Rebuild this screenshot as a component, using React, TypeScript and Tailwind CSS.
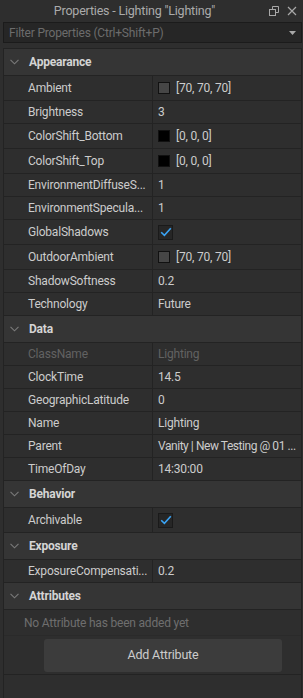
import React from 'react';

type Row = {
  label: string;
  value?: string;
  swatch?: string;
  check?: boolean;
  disabled?: boolean;
  tight?: boolean;
};

type Section = { title: string; rows: Row[] };

const sections: Section[] = [
  {
    title: 'Appearance',
    rows: [
      { label: 'Ambient', value: '[70, 70, 70]', swatch: 'bg-[#464646]' },
      { label: 'Brightness', value: '3' },
      { label: 'ColorShift_Bottom', value: '[0, 0, 0]', swatch: 'bg-[#000000]' },
      { label: 'ColorShift_Top', value: '[0, 0, 0]', swatch: 'bg-[#000000]' },
      { label: 'EnvironmentDiffuseS...', value: '1' },
      { label: 'EnvironmentSpecula...', value: '1' },
      { label: 'GlobalShadows', check: true },
      { label: 'OutdoorAmbient', value: '[70, 70, 70]', swatch: 'bg-[#464646]' },
      { label: 'ShadowSoftness', value: '0.2' },
      { label: 'Technology', value: 'Future' },
    ],
  },
  {
    title: 'Data',
    rows: [
      { label: 'ClassName', value: 'Lighting', disabled: true },
      { label: 'ClockTime', value: '14.5' },
      { label: 'GeographicLatitude', value: '0' },
      { label: 'Name', value: 'Lighting' },
      { label: 'Parent', value: 'Vanity | New Testing @ 01 ...', tight: true },
      { label: 'TimeOfDay', value: '14:30:00' },
    ],
  },
  {
    title: 'Behavior',
    rows: [{ label: 'Archivable', check: true }],
  },
  {
    title: 'Exposure',
    rows: [{ label: 'ExposureCompensati...', value: '0.2' }],
  },
];

function Chevron() {
  return (
    <svg width="9" height="6" viewBox="0 0 9 6" className="shrink-0">
      <path d="M0.5 0.8 L4.5 4.8 L8.5 0.8" fill="none" stroke="#7a7a7a" strokeWidth="1.1" />
    </svg>
  );
}

function Header({ title }: { title: string }) {
  return (
    <div className="h-[27px] flex items-center bg-[#353535] border-b border-[#232323] pl-[6px]">
      <Chevron />
      <span className="ml-[10px] font-bold text-[#d4d4d4] text-[12px]">{title}</span>
    </div>
  );
}

function PropRow({ row }: { row: Row }) {
  const tall = row.swatch || row.check;
  const color = row.disabled ? 'text-[#626262]' : 'text-[#cccccc]';
  return (
    <div className={`flex border-b border-[#232323] ${tall ? 'h-[25px]' : 'h-[23px]'}`}>
      <div
        className={`w-[149px] shrink-0 border-r border-[#232323] pl-[24px] flex items-center whitespace-nowrap overflow-hidden ${color}`}
      >
        {row.label}
      </div>
      <div
        className={`flex-1 flex items-center pl-[5px] whitespace-nowrap ${color} ${
          row.tight ? 'tracking-[-0.45px]' : ''
        }`}
      >
        {row.swatch && (
          <span className={`w-[12px] h-[12px] border border-[#111] mr-[6px] ${row.swatch}`} />
        )}
        {row.check && (
          <span className="w-[15px] h-[15px] border border-[#1a1a1a] bg-[#262626] flex items-center justify-center">
            <svg width="12" height="10" viewBox="0 0 12 10">
              <path d="M1.2 5.2 L4.4 8.4 L10.8 1.2" fill="none" stroke="#3aa3f4" strokeWidth="1.6" />
            </svg>
          </span>
        )}
        {row.value}
      </div>
    </div>
  );
}

export default function App() {
  return (
    <div className="w-[303px] h-[698px] overflow-hidden bg-[#2e2e2e] font-['Roboto',sans-serif] text-[12px] tracking-[-0.2px]">
      {/* Title bar */}
      <div className="h-[22px] flex items-center">
        <div className="flex-1 text-center text-[#ababab] text-[12.5px] pt-[1px]">
          Properties - Lighting "Lighting"
        </div>
        <div className="flex items-center gap-[8px] pr-[6px]">
          <svg width="10" height="10" viewBox="0 0 10 10">
            <rect x="0.5" y="3.5" width="6" height="6" fill="none" stroke="#a8a8a8" />
            <path d="M3.5 3.5 V0.5 H9.5 V6.5 H6.5" fill="none" stroke="#a8a8a8" />
          </svg>
          <svg width="10" height="10" viewBox="0 0 10 10">
            <path d="M1 1 L9 9 M9 1 L1 9" stroke="#a8a8a8" strokeWidth="1.2" />
          </svg>
        </div>
      </div>

      {/* Filter box */}
      <div className="ml-[3px] mr-[1px] h-[21px] flex items-center border border-[#1b1b1b] bg-[#262626] pl-[5px] pr-[5px]">
        <span className="flex-1 text-[#6c6c6c] text-[12px]">Filter Properties (Ctrl+Shift+P)</span>
        <svg width="7" height="4" viewBox="0 0 7 4">
          <path d="M0 0 H7 L3.5 4 Z" fill="#a8a8a8" />
        </svg>
      </div>

      {/* Property list */}
      <div className="mt-[5px] ml-[3px] mr-[1px] border-t border-l border-r border-[#232323]">
        {sections.map((s) => (
          <div key={s.title}>
            <Header title={s.title} />
            {s.rows.map((r) => (
              <PropRow key={r.label} row={r} />
            ))}
          </div>
        ))}
        <Header title="Attributes" />
        <div className="h-[26px] flex items-center pl-[20px] text-[#6e6e6e] border-b border-[#2a2a2a]">
          No Attribute has been added yet
        </div>
        <div className="pt-[3px] pb-[2px] border-b border-[#232323] flex">
          <button className="ml-[40px] w-[238px] h-[33px] rounded-[3px] bg-[#3c3c3c] text-[#cccccc] text-[12.5px]">
            Add Attribute
          </button>
        </div>
        <div className="h-[30px]" />
      </div>
    </div>
  );
}
